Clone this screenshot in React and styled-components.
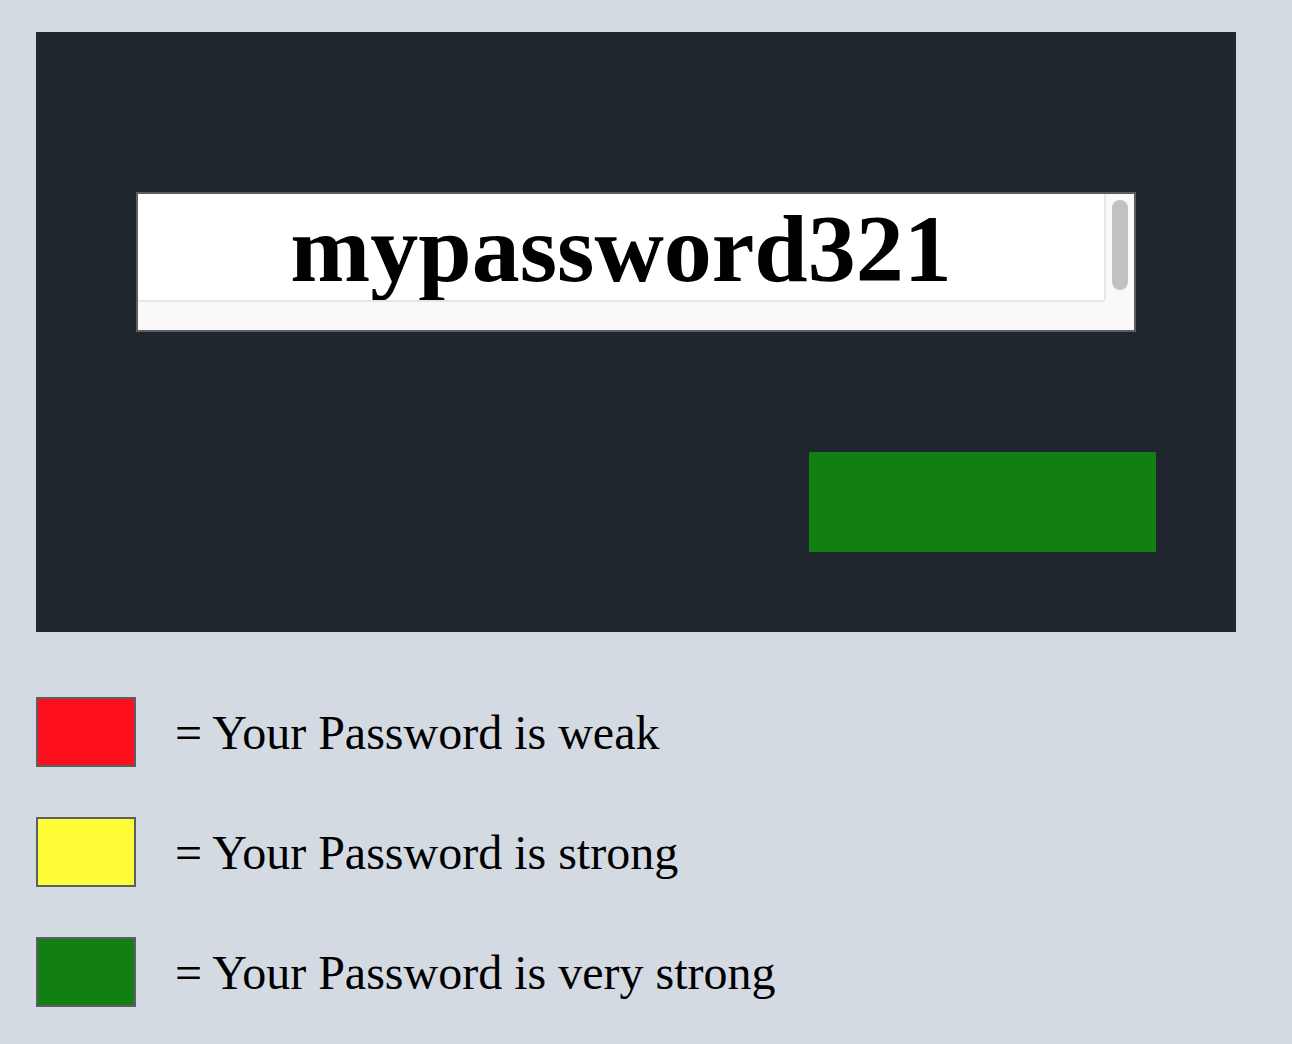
import React, { useState } from "react";
import styled, { createGlobalStyle } from "styled-components";

const GlobalStyle = createGlobalStyle`
  html, body {
    margin: 0;
    background: #d3dae2;
    font-family: "Liberation Serif", "Times New Roman", serif;
  }
`;

const Page = styled.div`
  padding: 32px 36px;
  width: 1200px;
`;

const Panel = styled.div`
  background: #1f262e;
  height: 600px;
  box-sizing: border-box;
  padding-top: 160px;
  display: flex;
  flex-direction: column;
`;

const Field = styled.div`
  align-self: center;
  width: 1000px;
  height: 140px;
  box-sizing: border-box;
  border: 2px solid #5e5e5e;
  background: #f9f9f9;
  display: grid;
  grid-template-columns: 1fr 30px;
  grid-template-rows: 1fr 30px;
`;

const Input = styled.textarea`
  border: none;
  padding: 2px 2px 0;
  margin: 0;
  resize: none;
  overflow: hidden;
  outline: none;
  background: #fff;
  color: #000;
  font-family: "Liberation Serif", "Times New Roman", serif;
  font-size: 96px;
  line-height: 1.1;
  font-weight: bold;
  text-align: center;
`;

const VTrack = styled.div`
  border-left: 2px solid #e6e6e6;
  padding: 6px 6px 0 6px;
`;

const Thumb = styled.div`
  width: 16px;
  height: 90px;
  border-radius: 8px;
  background: #c1c1c1;
`;

const HTrack = styled.div`
  border-top: 2px solid #e6e6e6;
`;

const Meter = styled.div`
  align-self: flex-end;
  margin: 120px 80px 0 0;
  height: 100px;
  background: ${(p) => p.$color};
`;

const Legend = styled.div`
  display: flex;
  flex-direction: column;
  gap: 50px;
  margin-top: 65px;
`;

const Row = styled.div`
  display: flex;
  align-items: center;
  gap: 39px;
`;

const Swatch = styled.div`
  width: 100px;
  height: 70px;
  box-sizing: border-box;
  border: 2px solid #5b5f64;
  background: ${(p) => p.$color};
`;

const Label = styled.span`
  font-size: 48px;
  color: #000;
`;

const levels = [
  { color: "#fe0f1e", text: "weak" },
  { color: "#fffc38", text: "strong" },
  { color: "#117f12", text: "very strong" },
];

export default function App() {
  const [password, setPassword] = useState("mypassword321");

  return (
    <Page>
      <GlobalStyle />
      <Panel>
        <Field>
          <Input
            value={password}
            onChange={(e) => setPassword(e.target.value)}
            spellCheck={false}
          />
          <VTrack>
            <Thumb />
          </VTrack>
          <HTrack />
        </Field>
        <Meter $color="#117f12" style={{ width: 347 }} />
      </Panel>
      <Legend>
        {levels.map((l) => (
          <Row key={l.text}>
            <Swatch $color={l.color} />
            <Label>= Your Password is {l.text}</Label>
          </Row>
        ))}
      </Legend>
    </Page>
  );
}
